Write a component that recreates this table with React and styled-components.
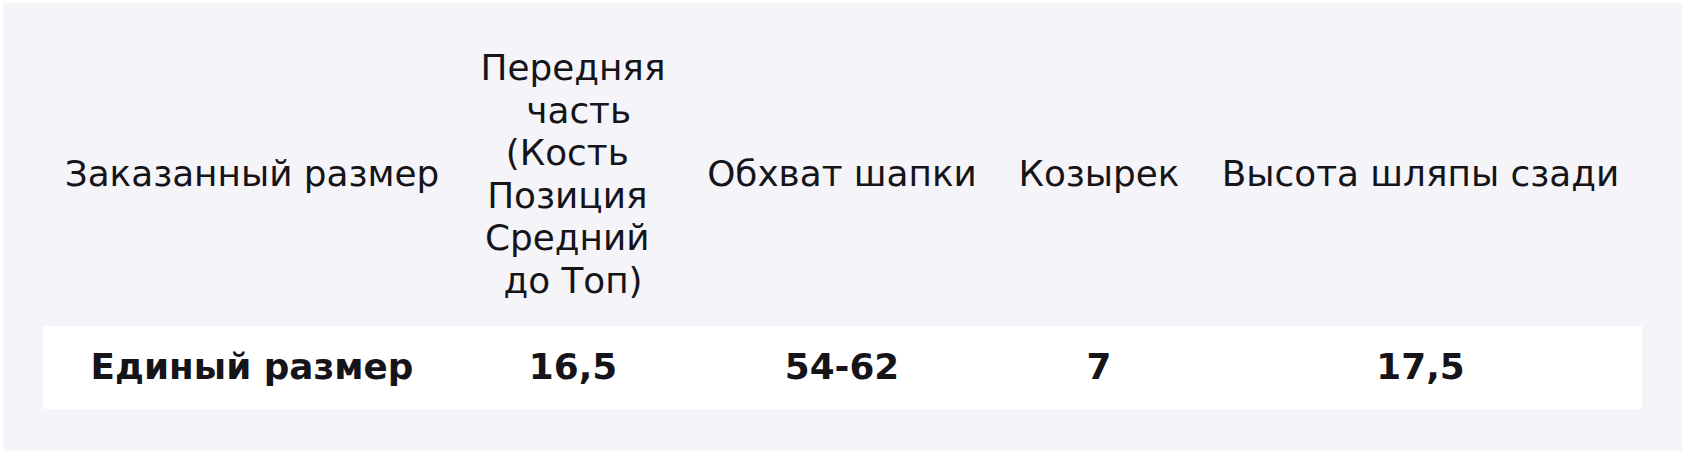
// Package dependencies
import React from 'react';
import styled, { createGlobalStyle } from 'styled-components';

// Data dependencies
const columns = [
  { id: 'size', width: 418, label: ['Заказанный размер'] },
  {
    id: 'front',
    width: 224,
    label: ['Передняя', '\u00a0часть', '(Кость\u00a0', 'Позиция\u00a0', 'Средний\u00a0', 'до Топ)'],
  },
  { id: 'girth', width: 314, label: ['Обхват шапки'] },
  { id: 'visor', width: 200, label: ['Козырек'] },
  { id: 'back', width: 443, label: ['Высота шляпы сзади'] },
];

const rows = [
  { id: 1, values: ['Единый размер', '16,5', '54-62', '7', '17,5'] },
];

// Component
export default function App() {
  return (
    <>
      <GlobalStyle />
      <Page>
        <Panel>
          <SizeTable>
            <colgroup>
              {columns.map((col) => (
                <Col key={col.id} $width={col.width} />
              ))}
            </colgroup>
            <thead>
              <tr>
                {columns.map((col) => (
                  <HeadCell key={col.id}>
                    {col.label.map((line, i) => (
                      <HeadLine key={i}>{line}</HeadLine>
                    ))}
                  </HeadCell>
                ))}
              </tr>
            </thead>
            <tbody>
              {rows.map((row) => (
                <DataRow key={row.id}>
                  {row.values.map((value, i) => (
                    <DataCell key={columns[i].id}>{value}</DataCell>
                  ))}
                </DataRow>
              ))}
            </tbody>
          </SizeTable>
        </Panel>
      </Page>
    </>
  );
}

// Styling
const GlobalStyle = createGlobalStyle`
  html, body {
    margin: 0;
    padding: 0;
    background: #ffffff;
  }

  body {
    font-family: "DejaVu Sans", Verdana, sans-serif;
    color: #141419;
  }
`;

const Page = styled.div`
  padding: 3px;
`;

const Panel = styled.section`
  background-color: #f4f4f9;
  padding: 40px 40px 42px;
`;

const SizeTable = styled.table`
  width: 100%;
  table-layout: fixed;
  border-collapse: collapse;
  border-spacing: 0;
`;

const Col = styled.col`
  width: ${({ $width }) => $width}px;
`;

const HeadCell = styled.th`
  padding: 4px 8px 23px;
  font-size: 35.8px;
  line-height: 42.6px;
  font-weight: 400;
  text-align: center;
  vertical-align: middle;
  color: #141419;
`;

const HeadLine = styled.span`
  display: block;
  white-space: pre;
`;

const DataRow = styled.tr`
  background-color: #ffffff;
`;

const DataCell = styled.td`
  padding: 20px 8px 21px;
  font-size: 35.8px;
  line-height: 42.6px;
  font-weight: 700;
  text-align: center;
  vertical-align: middle;
  color: #141419;
  white-space: nowrap;
`;
